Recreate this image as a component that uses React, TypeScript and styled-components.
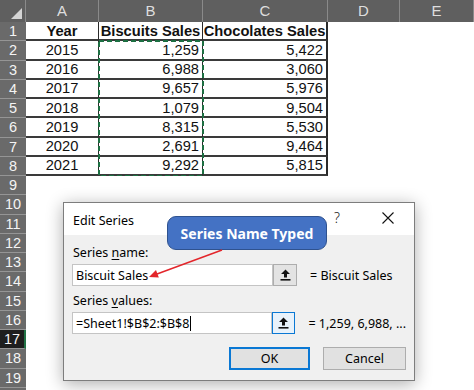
import React from 'react';
import styled, { createGlobalStyle } from 'styled-components';

const GlobalStyle = createGlobalStyle`
  html, body {
    margin: 0;
    padding: 0;
    background: #fff;
  }
`;

const columns = ['A', 'B', 'C', 'D', 'E'];

const table = [
  ['Year', 'Biscuits Sales', 'Chocolates Sales'],
  ['2015', '1,259', '5,422'],
  ['2016', '6,988', '3,060'],
  ['2017', '9,657', '5,976'],
  ['2018', '1,079', '9,504'],
  ['2019', '8,315', '5,530'],
  ['2020', '2,691', '9,464'],
  ['2021', '9,292', '5,815'],
];

const ROW_COUNT = 20;
const ACTIVE_ROW = 17;

const App: React.FC = () => {
  return (
    <Screen>
      <GlobalStyle />
      <Sheet>
        <Corner />
        {columns.map((c, ci) => (
          <ColHead key={c} $col={ci + 2}>
            {c}
          </ColHead>
        ))}
        {Array.from({ length: ROW_COUNT }, (_, i) => {
          const rowNo = i + 1;
          const data = table[i];
          return (
            <React.Fragment key={rowNo}>
              <RowHead $row={rowNo + 1} $active={rowNo === ACTIVE_ROW}>
                {rowNo}
              </RowHead>
              {columns.map((c, ci) => {
                if (data && ci < 3) {
                  const header = i === 0;
                  return (
                    <Cell
                      key={c}
                      $row={rowNo + 1}
                      $col={ci + 2}
                      $boxed
                      $bold={header}
                      $align={header || ci === 0 ? 'center' : 'right'}
                      $lastCol={ci === 2}
                    >
                      {data[ci]}
                    </Cell>
                  );
                }
                return <Cell key={c} $row={rowNo + 1} $col={ci + 2} />;
              })}
            </React.Fragment>
          );
        })}
        {/* copy selection around B2:B8 */}
        <MarchingAnts>
          <svg width="106" height="137" viewBox="0 0 106 137">
            <rect
              x="1"
              y="1"
              width="104"
              height="135"
              fill="none"
              stroke="#1d6f42"
              strokeWidth="2"
              strokeDasharray="5 3"
            />
          </svg>
        </MarchingAnts>
      </Sheet>

      <Dialog>
        <TitleBar>
          <DialogTitle>Edit Series</DialogTitle>
          <TitleControls>
            <HelpMark>?</HelpMark>
            <CloseButton>
              <svg width="12" height="12" viewBox="0 0 12 12">
                <path d="M0.5 0.5 L11.5 11.5 M11.5 0.5 L0.5 11.5" stroke="#111" strokeWidth="1.1" />
              </svg>
            </CloseButton>
          </TitleControls>
        </TitleBar>
        <DialogBody>
          <FieldLabel>
            Series <u>n</u>ame:
          </FieldLabel>
          <FieldRow>
            <TextInput>Biscuit Sales</TextInput>
            <CollapseButton>
              <CollapseIcon />
            </CollapseButton>
            <ResultText>= Biscuit Sales</ResultText>
          </FieldRow>
          <FieldLabel $spaced>
            Series <u>v</u>alues:
          </FieldLabel>
          <FieldRow>
            <TextInput>
              =Sheet1!$B$2:$B$8
              <Caret />
            </TextInput>
            <CollapseButton $hover>
              <CollapseIcon />
            </CollapseButton>
            <ResultText>= 1,259, 6,988, ...</ResultText>
          </FieldRow>
          <ButtonRow>
            <DialogButton $primary>OK</DialogButton>
            <DialogButton>Cancel</DialogButton>
          </ButtonRow>
        </DialogBody>
      </Dialog>

      <Callout>Series Name Typed</Callout>
      <ArrowLayer width="474" height="390" viewBox="0 0 474 390">
        <line x1="222" y1="250" x2="157" y2="274" stroke="#e3262b" strokeWidth="1.5" />
        <polygon points="149,277 158.8,277.6 156,270.1" fill="#e3262b" />
      </ArrowLayer>
    </Screen>
  );
};

const CollapseIcon: React.FC = () => (
  <svg width="11" height="12" viewBox="0 0 11 12">
    <path d="M5.5 0.5 L10 5 H7 V8.5 H4 V5 H1 Z" fill="#111" />
    <rect x="0.5" y="10" width="10" height="1.6" fill="#111" />
  </svg>
);

export default App;

const Screen = styled.div`
  position: relative;
  width: 474px;
  height: 390px;
  overflow: hidden;
  background: #fff;
`;

const Sheet = styled.div`
  display: grid;
  grid-template-columns: 26px 73px 104px 125px 72px 74px;
  grid-template-rows: 22px repeat(${ROW_COUNT}, 19.25px);
  font-family: 'Liberation Sans', Arial, sans-serif;
`;

const Corner = styled.div`
  grid-column: 1;
  grid-row: 1;
  position: relative;
  background: #5f5f5f;
  border-right: 1px solid #8a8a8a;
  &::after {
    content: '';
    position: absolute;
    right: 3px;
    bottom: 3px;
    width: 11px;
    height: 11px;
    background: #d4d4d4;
    clip-path: polygon(100% 0, 100% 100%, 0 100%);
  }
`;

const ColHead = styled.div<{ $col: number }>`
  grid-column: ${(p) => p.$col};
  grid-row: 1;
  background: #5f5f5f;
  border-right: 1px solid #8a8a8a;
  color: #dedede;
  font-size: 15px;
  line-height: 22px;
  text-align: center;
`;

const RowHead = styled.div<{ $row: number; $active?: boolean }>`
  grid-column: 1;
  grid-row: ${(p) => p.$row};
  box-sizing: border-box;
  background: ${(p) => (p.$active ? '#1e1e1e' : '#6a6a6a')};
  border-bottom: 1px solid #959595;
  border-right: ${(p) => (p.$active ? '2px solid #217346' : '0')};
  color: #f4f4f4;
  font-size: 14.5px;
  display: flex;
  align-items: center;
  justify-content: center;
`;

const Cell = styled.div<{
  $row: number;
  $col: number;
  $boxed?: boolean;
  $bold?: boolean;
  $align?: 'center' | 'right';
  $lastCol?: boolean;
}>`
  grid-column: ${(p) => p.$col};
  grid-row: ${(p) => p.$row};
  box-sizing: border-box;
  background: #fff;
  color: #111;
  font-size: 14.7px;
  font-weight: ${(p) => (p.$bold ? 700 : 400)};
  padding: 0 ${(p) => (p.$align === 'right' ? '3px' : '0')} 0 0;
  white-space: nowrap;
  overflow: hidden;
  display: flex;
  align-items: center;
  justify-content: ${(p) => (p.$align === 'right' ? 'flex-end' : 'center')};
  border-bottom: ${(p) => (p.$boxed ? '2px solid #3a3a3a' : '0')};
  border-right: ${(p) =>
    p.$boxed ? (p.$lastCol ? '2px solid #2a2a2a' : '1px solid #2a2a2a') : '0'};
`;

const MarchingAnts = styled.div`
  grid-column: 3;
  grid-row: 3 / 10;
  margin: -1px -1px 0 -1px;
  pointer-events: none;
  overflow: hidden;
  svg {
    display: block;
  }
`;

const Dialog = styled.div`
  position: absolute;
  left: 63px;
  top: 202px;
  width: 352px;
  height: 179px;
  box-sizing: border-box;
  border: 1px solid #7d7d7d;
  background: #f0f0f0;
  box-shadow: 0 3px 16px rgba(0, 0, 0, 0.32);
  display: flex;
  flex-direction: column;
  font-family: 'Noto Sans', 'Open Sans', sans-serif;
  font-size: 12.5px;
  color: #000;
`;

const TitleBar = styled.div`
  height: 32px;
  background: #fff;
  display: flex;
  align-items: center;
  padding: 0 0 0 9px;
`;

const DialogTitle = styled.div`
  font-size: 12.5px;
  margin-top: 2px;
`;

const TitleControls = styled.div`
  margin-left: auto;
  display: flex;
  align-items: center;
  gap: 31px;
  padding-right: 16px;
`;

const HelpMark = styled.div`
  width: 20px;
  text-align: center;
  font-size: 14px;
  font-weight: 300;
  color: #222;
  margin-top: -4px;
`;

const CloseButton = styled.div`
  width: 20px;
  display: flex;
  justify-content: center;
  margin-top: -2px;
`;

const DialogBody = styled.div`
  display: flex;
  flex-direction: column;
  padding: 9px 8px 0 8px;
`;

const FieldLabel = styled.div<{ $spaced?: boolean }>`
  line-height: 17px;
  padding-left: 1px;
  margin-top: ${(p) => (p.$spaced ? '6px' : '0')};
  margin-bottom: 3px;
  u {
    text-underline-offset: 2px;
  }
`;

const FieldRow = styled.div`
  display: flex;
  align-items: center;
`;

const TextInput = styled.div`
  box-sizing: border-box;
  width: 201px;
  height: 22px;
  background: #fff;
  border: 1px solid #c4c4c4;
  padding-left: 3px;
  display: flex;
  align-items: center;
  white-space: nowrap;
`;

const Caret = styled.span`
  display: inline-block;
  width: 1px;
  height: 15px;
  background: #000;
  margin-left: 1px;
`;

const CollapseButton = styled.div<{ $hover?: boolean }>`
  box-sizing: border-box;
  width: 24px;
  height: 22px;
  background: ${(p) => (p.$hover ? '#e8f2fb' : '#e3e3e3')};
  border: 1px solid ${(p) => (p.$hover ? '#0a78d4' : '#adadad')};
  display: flex;
  align-items: center;
  justify-content: center;
`;

const ResultText = styled.div`
  margin-left: 13px;
  white-space: nowrap;
`;

const ButtonRow = styled.div`
  display: flex;
  justify-content: flex-end;
  gap: 13px;
  margin-top: 13px;
`;

const DialogButton = styled.div<{ $primary?: boolean }>`
  box-sizing: border-box;
  width: ${(p) => (p.$primary ? '81px' : '83px')};
  height: 23px;
  background: #e1e1e1;
  border: ${(p) => (p.$primary ? '2px solid #0a78d4' : '1px solid #adadad')};
  display: flex;
  align-items: center;
  justify-content: center;
`;

const Callout = styled.div`
  position: absolute;
  left: 167px;
  top: 216px;
  width: 160px;
  height: 34px;
  box-sizing: border-box;
  background: #4472c4;
  border: 1px solid #2f528f;
  border-radius: 9px;
  color: #fff;
  font-family: 'Noto Sans', 'Open Sans', sans-serif;
  font-weight: 700;
  font-size: 14px;
  display: flex;
  align-items: center;
  justify-content: center;
`;

const ArrowLayer = styled.svg`
  position: absolute;
  left: 0;
  top: 0;
  pointer-events: none;
`;
